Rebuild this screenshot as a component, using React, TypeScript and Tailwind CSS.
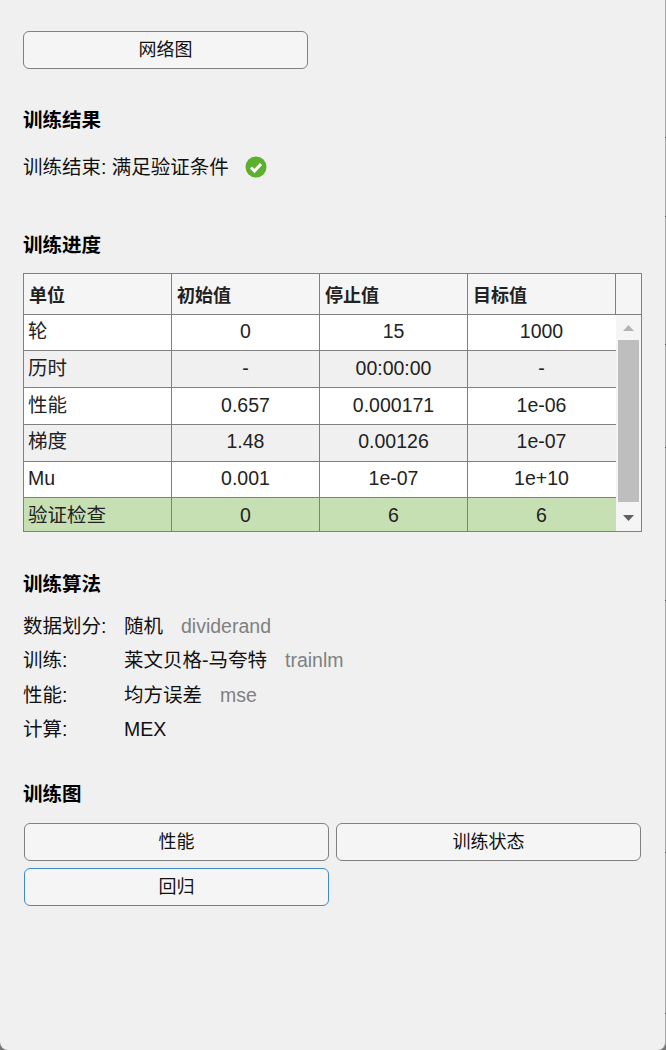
import * as React from 'react';

const rows = [
  { name: '轮', vals: ['0', '15', '1000'], bg: 'bg-white', h: 'h-[36px]', pad: ' pb-[2px]' },
  { name: '历时', vals: ['-', '00:00:00', '-'], bg: 'bg-[#f0f0f0]', h: 'h-[37px]', pad: '' },
  { name: '性能', vals: ['0.657', '0.000171', '1e-06'], bg: 'bg-white', h: 'h-[37px]', pad: '' },
  { name: '梯度', vals: ['1.48', '0.00126', '1e-07'], bg: 'bg-[#f0f0f0]', h: 'h-[37px]', pad: ' pb-[2px]' },
  { name: 'Mu', vals: ['0.001', '1e-07', '1e+10'], bg: 'bg-white', h: 'h-[36px]', pad: ' pb-[2px]' },
  { name: '验证检查', vals: ['0', '6', '6'], bg: 'bg-[#c6e0b4]', h: 'h-[33px]', pad: ' pt-[2px]' },
];

const algos = [
  { label: '数据划分:', value: '随机', fn: 'dividerand', row: 'h-[28px]' },
  { label: '训练:', value: '莱文贝格-马夸特', fn: 'trainlm', row: 'h-[28px]' },
  { label: '性能:', value: '均方误差', fn: 'mse', row: 'h-[28px] mt-px' },
  { label: '计算:', value: 'MEX', fn: '', row: 'h-[28px]' },
];

// little marks of the window behind, on the right edge
const ticks = ['top-[137px]', 'top-[216px]', 'top-[344px]', 'top-[447px]', 'top-[600px]', 'top-[852px]', 'top-[1013px]'];

function Heading(p: { children: React.ReactNode; className?: string }) {
  return <h2 className={'h-[28px] leading-[28px] font-bold text-black ' + (p.className ?? '')}>{p.children}</h2>;
}

function Button(p: { label: string; focused?: boolean; className?: string }) {
  return (
    <button
      className={
        'h-[38px] rounded-[6px] border bg-[#f5f5f5] text-[18px] text-[#111] ' +
        (p.focused ? 'border-[#3d8bc9] ' : 'border-[#808080] ') +
        (p.className ?? '')
      }
    >
      {p.label}
    </button>
  );
}

function ResultsTable() {
  return (
    <div className="mt-[14px] w-[619px] border border-[#808080] bg-[#f5f5f5]">
      <div className="flex h-[41px] border-b border-[#808080] text-[18px] font-bold text-[#222]">
        {['单位', '初始值', '停止值', '目标值'].map((h) => (
          <div key={h} className="flex w-[148px] items-center border-r border-[#808080] pl-[5px] pt-[5px]">
            {h}
          </div>
        ))}
      </div>
      <div className="flex">
        <div className="w-[592px]">
          {rows.map((r, i) => (
            <div
              key={r.name}
              className={'flex ' + r.h + ' ' + r.bg + (i < rows.length - 1 ? ' border-b border-[#808080]' : '')}
            >
              <div className={'flex w-[148px] items-center border-r border-[#808080] pl-[4px] text-[#222]' + r.pad}>{r.name}</div>
              {r.vals.map((v, j) => (
                <div
                  key={j}
                  className={
                    'flex w-[148px] items-center justify-center text-[#222]' + r.pad + (j < 2 ? ' border-r border-[#808080]' : ' pr-px')
                  }
                >
                  {v}
                </div>
              ))}
            </div>
          ))}
        </div>
        <div className="flex w-[25px] flex-col items-center bg-[#f5f5f5] pt-[7px]">
          <svg width="11" height="6" viewBox="0 0 11 6" className="mt-[3px] shrink-0">
            <path d="M5.5 0 L11 6 L0 6 Z" fill="#b4b4b4" />
          </svg>
          <div className="mx-auto mt-[9px] h-[162px] w-[21px] bg-[#bebebe]" />
          <svg width="11" height="6" viewBox="0 0 11 6" className="mt-[13px] shrink-0">
            <path d="M0 0 L11 0 L5.5 6 Z" fill="#606060" />
          </svg>
        </div>
      </div>
    </div>
  );
}

export default function App() {
  return (
    <div className="relative h-[1050px] w-[666px] overflow-hidden bg-[#777]">
      <div className="h-full rounded-b-[8px] border-r border-[#a8a8a8] bg-[#f0f0f0] pl-[23px] pt-[31px] font-['Liberation_Sans','Noto_Sans_CJK_SC',sans-serif] text-[19.5px] text-[#111]">
        <Button label="网络图" className="block w-[285px]" />
        <Heading className="mt-[37px]">训练结果</Heading>
        <div className="mt-[20px] flex h-[28px] items-center">
          <span>训练结束: 满足验证条件</span>
          <svg width="22" height="22" viewBox="0 0 22 22" className="ml-[16px] mt-[-3px]">
            <circle cx="11" cy="11" r="10.5" fill="#5bb02c" />
            <path d="M6 11.5 L9.5 15 L16 8" fill="none" stroke="#fff" strokeWidth="3" />
          </svg>
        </div>
        <Heading className="mt-[49px]">训练进度</Heading>
        <ResultsTable />
        <Heading className="mt-[38px]">训练算法</Heading>
        <div className="mt-[15px] flex flex-col gap-[6px]">
          {algos.map((a) => (
            <div key={a.label} className={'flex items-center ' + a.row}>
              <span className="w-[101px]">{a.label}</span>
              <span>{a.value}</span>
              {a.fn && <span className="ml-[18px] text-[#808080]">{a.fn}</span>}
            </div>
          ))}
        </div>
        <Heading className="mt-[36px]">训练图</Heading>
        <div className="ml-px mt-[15px] grid w-[617px] grid-cols-[305px_305px] gap-x-[7px] gap-y-[7px]">
          <Button label="性能" />
          <Button label="训练状态" />
          <Button label="回归" focused />
        </div>
      </div>
      {ticks.map((t) => (
        <div key={t} className={'absolute right-0 h-px w-px bg-[#444] ' + t} />
      ))}
    </div>
  );
}
